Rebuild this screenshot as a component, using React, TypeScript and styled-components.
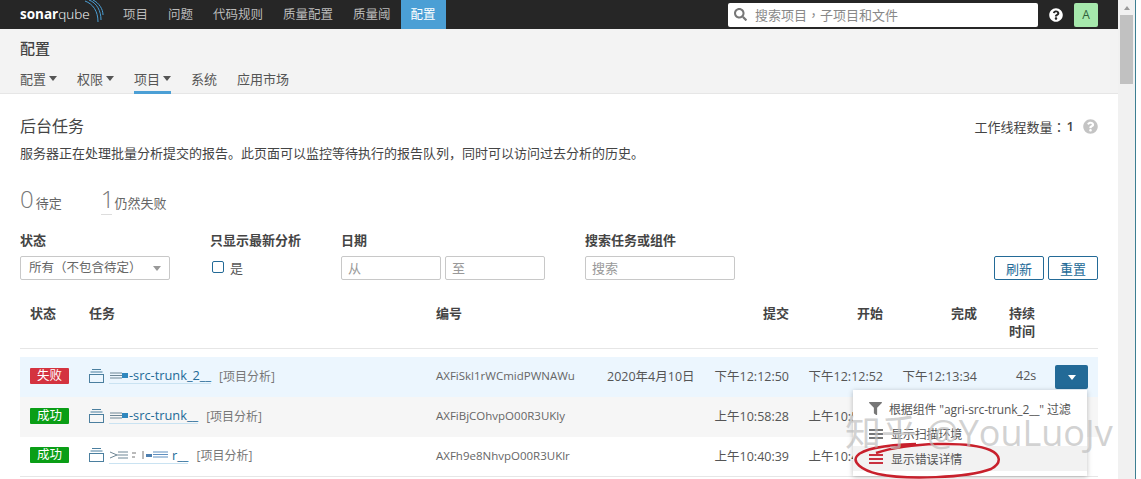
import React from "react";
import styled, { createGlobalStyle } from "styled-components";
import { FaFilter, FaQuestionCircle, FaSearch } from "react-icons/fa";

const GlobalStyle = createGlobalStyle`
  html, body {
    margin: 0;
    height: 100%;
    overflow: hidden;
    background: #fff;
  }
  body, input, button {
    font-family: "Open Sans", "Noto Sans CJK SC", sans-serif;
    font-size: 13px;
    color: #444;
  }
  * { box-sizing: border-box; }
`;

const centredPunctuation = `"Open Sans", "Noto Sans CJK TC", sans-serif`;

const Caret = () => (
  <svg width="8" height="5" viewBox="0 0 8 5" style={{ display: "block" }}>
    <path d="M0 0h8L4 5z" fill="currentColor" />
  </svg>
);

const ProjectIcon = () => (
  <svg width="15" height="14" viewBox="0 0 15 14" fill="none" stroke="#4b7f9f">
    <path d="M3 .5h9M1.5 3h12" />
    <rect x=".5" y="5.5" width="14" height="8" />
  </svg>
);

const Scribble = ({ kind }: { kind: "a" | "b" }) =>
  kind === "a" ? (
    <svg width="20" height="10" viewBox="0 0 20 10">
      <path d="M1 3h12M1 5.5h12M1 8h12" stroke="#6f8796" />
      <rect x="13" y="3" width="6" height="5" fill="#2f86bd" />
    </svg>
  ) : (
    <svg width="63" height="10" viewBox="0 0 63 10" fill="none">
      <path d="M1 2l7 3-7 3M9 2h10M8 5h11M9 8h10" stroke="#6f8796" />
      <path d="M23 3h4M23 7h3M34 1v8" stroke="#777" />
      <rect x="37" y="4" width="6" height="3" fill="#4d7fb0" />
      <path d="M44 2h15M44 4.5h15M44 7h15" stroke="#5f8fc0" />
    </svg>
  );

const tasks = [
  {
    ok: false,
    name: "-src-trunk_2__",
    scribble: "a" as const,
    id: "AXFiSkl1rWCmidPWNAWu",
    date: "2020年4月10日",
    submitted: "下午12:12:50",
    started: "下午12:12:52",
    finished: "下午12:13:34",
    duration: "42s",
  },
  {
    ok: true,
    name: "-src-trunk__",
    scribble: "a" as const,
    id: "AXFiBjCOhvpO00R3UKly",
    date: "",
    submitted: "上午10:58:28",
    started: "上午10:59:03",
    finished: "",
    duration: "",
  },
  {
    ok: true,
    name: "r__",
    scribble: "b" as const,
    id: "AXFh9e8NhvpO00R3UKlr",
    date: "",
    submitted: "上午10:40:39",
    started: "上午10:40:41",
    finished: "",
    duration: "",
  },
];

export default function App() {
  return (
    <>
      <GlobalStyle />
      <Window>
        <Page>
          <TopBar>
            <Logo>
              <b>sonar</b>qube
              <LogoArcs width="20" height="24" viewBox="0 0 20 24" fill="none" stroke="#4b9fd5">
                <path d="M1 1c8 3 13 10 13 21M5 0c8 3 12 11 12 20M9 0c6 3 10 9 10 15" />
              </LogoArcs>
            </Logo>
            <MainNav>
              <MainLink>项目</MainLink>
              <MainLink>问题</MainLink>
              <MainLink>代码规则</MainLink>
              <MainLink>质量配置</MainLink>
              <MainLink>质量阈</MainLink>
              <MainLink $active>配置</MainLink>
            </MainNav>
            <TopRight>
              <SearchBox>
                <FaSearch size={13} color="#777" />
                <span>搜索项目，子项目和文件</span>
              </SearchBox>
              <FaQuestionCircle size={14} color="#fff" />
              <Avatar>A</Avatar>
            </TopRight>
          </TopBar>

          <SubHeader>
            <SubTitle>配置</SubTitle>
            <Tabs>
              <Tab>配置 <Caret /></Tab>
              <Tab>权限 <Caret /></Tab>
              <Tab $active>项目 <Caret /></Tab>
              <Tab>系统</Tab>
              <Tab>应用市场</Tab>
            </Tabs>
          </SubHeader>

          <Content>
            <TitleRow>
              <PageTitle>后台任务</PageTitle>
              <Workers>
                工作线程数量：<strong>1</strong>
                <FaQuestionCircle size={15} color="#c4c4c4" />
              </Workers>
            </TitleRow>
            <Description>服务器正在处理批量分析提交的报告。此页面可以监控等待执行的报告队列，同时可以访问过去分析的历史。</Description>

            <Stats>
              <Stat>
                <StatValue>0</StatValue>待定
              </Stat>
              <Stat>
                <StatValue $underlined>1</StatValue>仍然失败
              </Stat>
            </Stats>

            <Filters>
              <Filter $width={190}>
                <FilterLabel>状态</FilterLabel>
                <Select>
                  所有（不包含待定）
                  <SelectCaret><Caret /></SelectCaret>
                </Select>
              </Filter>
              <Filter $width={131}>
                <FilterLabel>只显示最新分析</FilterLabel>
                <CheckRow>
                  <CheckBox />是
                </CheckRow>
              </Filter>
              <Filter $width={244}>
                <FilterLabel>日期</FilterLabel>
                <DateRow>
                  <Field $width={100}>从</Field>
                  <Field $width={100}>至</Field>
                </DateRow>
              </Filter>
              <Filter $width={150}>
                <FilterLabel>搜索任务或组件</FilterLabel>
                <Field $width={150}>搜索</Field>
              </Filter>
              <FilterButtons>
                <OutlineButton>刷新</OutlineButton>
                <OutlineButton>重置</OutlineButton>
              </FilterButtons>
            </Filters>

            <TableHead>
              <HeadCell $pad={10}>状态</HeadCell>
              <HeadCell>任务</HeadCell>
              <HeadCell>编号</HeadCell>
              <HeadCell />
              <HeadCell $right>提交</HeadCell>
              <HeadCell $right>开始</HeadCell>
              <HeadCell $right>完成</HeadCell>
              <HeadCell $pad={32}>持续<br />时间</HeadCell>
            </TableHead>

            <Rows>
              {tasks.map((task, i) => (
                <Row key={task.id} $index={i}>
                  <Cell $pad={10}>
                    <Badge $ok={task.ok}>{task.ok ? "成功" : "失败"}</Badge>
                  </Cell>
                  <TaskCell>
                    <ProjectIcon />
                    <ProjectLink>
                      <Scribble kind={task.scribble} />
                      {task.name}
                    </ProjectLink>
                    <TaskKind>[项目分析]</TaskKind>
                  </TaskCell>
                  <IdCell>{task.id}</IdCell>
                  <Cell $right>{task.date}</Cell>
                  <Cell $right>{task.submitted}</Cell>
                  <Cell $right>{task.started}</Cell>
                  <Cell $right>{task.finished}</Cell>
                  <Cell $pad={39}>{task.duration}</Cell>
                  {i === 0 && (
                    <Cell>
                      <ActionButton><Caret /></ActionButton>
                    </Cell>
                  )}
                </Row>
              ))}
              <Menu>
                <MenuItem $gap={7}>
                  <FaFilter size={13} color="#777" />
                  根据组件 "agri-src-trunk_2__" 过滤
                </MenuItem>
                <MenuItem>
                  <Bars $color="#777" />
                  显示扫描环境
                </MenuItem>
                <MenuItem $hover>
                  <Bars $color="#c9313f" />
                  显示错误详情
                </MenuItem>
              </Menu>
            </Rows>
          </Content>

          <Ellipse width="150" height="38" viewBox="0 0 150 38" fill="none">
            <path
              d="M22 12C55 1 115 0 136 9c11 5 12 13 1 19-24 9-85 11-113 5C7 29-2 21 3 15 8 9 28 4 62 3"
              stroke="#c8202c"
              strokeWidth="2.5"
            />
          </Ellipse>
          <Watermark>知乎 @YouLuoJv</Watermark>
        </Page>

        <ScrollTrack>
          <ScrollArrow />
          <ScrollThumb />
        </ScrollTrack>
        <WindowEdge />
      </Window>
    </>
  );
}

const Window = styled.div`
  display: flex;
  width: 1141px;
  height: 479px;
  overflow: hidden;
`;

const Page = styled.div`
  position: relative;
  width: 1118px;
  flex: none;
  overflow: hidden;
`;

const TopBar = styled.header`
  display: flex;
  align-items: stretch;
  height: 29px;
  padding: 0 20px;
  background: #262626;
`;

const Logo = styled.div`
  position: relative;
  width: 93px;
  color: #fff;
  font-size: 13.5px;
  font-weight: 300;
  line-height: 29px;
  b { font-weight: 700; }
`;

const LogoArcs = styled.svg`
  position: absolute;
  left: 64px;
  top: 0;
`;

const MainNav = styled.nav`
  display: flex;
`;

const MainLink = styled.a<{ $active?: boolean }>`
  padding: 0 10px;
  line-height: 29px;
  font-size: 12.5px;
  color: ${(p) => (p.$active ? "#fff" : "#bbb")};
  background: ${(p) => (p.$active ? "#4b9fd5" : "transparent")};
`;

const TopRight = styled.div`
  display: flex;
  align-items: center;
  margin-left: auto;
`;

const SearchBox = styled.div`
  display: flex;
  align-items: center;
  gap: 8px;
  width: 310px;
  height: 24px;
  margin-right: 11px;
  padding: 0 6px;
  background: #fff;
  border-radius: 2px;
  font-family: ${centredPunctuation};
  color: #888;
`;

const Avatar = styled.div`
  display: flex;
  align-items: center;
  justify-content: center;
  width: 24px;
  height: 24px;
  margin-left: 11px;
  background: #a6e8ac;
  border-radius: 2px;
  color: #2f5f3a;
  font-size: 12px;
`;

const SubHeader = styled.div`
  height: 65px;
  padding: 9px 20px 0;
  background: #f3f3f3;
  border-bottom: 1px solid #e6e6e6;
`;

const SubTitle = styled.div`
  font-size: 15px;
  line-height: 20px;
  font-weight: 500;
`;

const Tabs = styled.div`
  display: flex;
  gap: 20px;
  margin-top: 11px;
`;

const Tab = styled.a<{ $active?: boolean }>`
  display: flex;
  align-items: center;
  gap: 3px;
  height: 25px;
  padding-bottom: 3px;
  color: #555;
  border-bottom: 3px solid ${(p) => (p.$active ? "#4b9fd5" : "transparent")};
`;

const Content = styled.main`
  padding: 21px 20px 0;
`;

const TitleRow = styled.div`
  display: flex;
  align-items: center;
  justify-content: space-between;
`;

const PageTitle = styled.h1`
  margin: 0;
  font-size: 16px;
  font-weight: 400;
  line-height: 22px;
`;

const Workers = styled.div`
  display: flex;
  align-items: center;
  font-family: ${centredPunctuation};
  strong {
    margin: 0 9px 0 1px;
    font-weight: 600;
  }
`;

const Description = styled.p`
  margin: 7px 0 0;
  line-height: 18px;
`;

const Stats = styled.div`
  display: flex;
  gap: 39px;
  margin-top: 22px;
`;

const Stat = styled.div`
  display: flex;
  align-items: baseline;
  gap: 2px;
  color: #666;
`;

const StatValue = styled.span<{ $underlined?: boolean }>`
  font-size: 24px;
  font-weight: 300;
  line-height: 30px;
  letter-spacing: ${(p) => (p.$underlined ? "-2px" : "0")};
  color: #777;
  border-bottom: 1px solid ${(p) => (p.$underlined ? "#ddd" : "transparent")};
`;

const Filters = styled.div`
  display: flex;
  align-items: flex-end;
  margin-top: 16px;
`;

const Filter = styled.div<{ $width: number }>`
  width: ${(p) => p.$width}px;
`;

const FilterLabel = styled.div`
  margin-bottom: 7px;
  font-weight: 600;
  line-height: 18px;
  color: #444;
`;

const Select = styled.div`
  position: relative;
  width: 150px;
  height: 24px;
  padding: 0 8px;
  border: 1px solid #c8c8c8;
  border-radius: 2px;
  font-family: ${centredPunctuation};
  font-size: 12.5px;
  line-height: 22px;
  color: #666;
`;

const SelectCaret = styled.span`
  position: absolute;
  right: 8px;
  top: 9px;
  color: #999;
`;

const CheckRow = styled.div`
  display: flex;
  align-items: center;
  gap: 6px;
  height: 22px;
  margin: 0 0 2px 2px;
  color: #555;
`;

const CheckBox = styled.span`
  width: 12px;
  height: 12px;
  border: 1px solid #236a97;
  border-radius: 2px;
`;

const DateRow = styled.div`
  display: flex;
  gap: 4px;
`;

const Field = styled.div<{ $width: number }>`
  width: ${(p) => p.$width}px;
  height: 24px;
  padding: 0 6px;
  border: 1px solid #c8c8c8;
  border-radius: 2px;
  line-height: 22px;
  color: #999;
`;

const FilterButtons = styled.div`
  display: flex;
  gap: 4px;
  margin-left: auto;
`;

const OutlineButton = styled.button`
  width: 50px;
  height: 24px;
  padding: 0;
  background: #fff;
  border: 1px solid #236a97;
  border-radius: 2px;
  color: #236a97;
`;

const columns = "69px 347px 171px 87px 95px 94px 94px 78px 43px";

const TableHead = styled.div`
  display: grid;
  grid-template-columns: ${columns};
  height: 58px;
  margin-top: 11px;
  padding-top: 13px;
  border-bottom: 1px solid #e6e6e6;
  font-weight: 600;
  line-height: 18px;
`;

const HeadCell = styled.div<{ $pad?: number; $right?: boolean }>`
  padding-left: ${(p) => p.$pad ?? 0}px;
  text-align: ${(p) => (p.$right ? "right" : "left")};
`;

const Rows = styled.div`
  position: relative;
  margin-top: 8px;
`;

const rowBackgrounds = ["#ecf6fe", "#f6f6f6", "#fff"];

const Row = styled.div<{ $index: number }>`
  display: grid;
  grid-template-columns: ${columns};
  align-items: center;
  height: 40px;
  padding-bottom: 3px;
  background: ${(p) => rowBackgrounds[p.$index]};
  border-bottom: ${(p) => (p.$index === 2 ? "1px solid #e6e6e6" : "none")};
  font-size: 12.5px;
  color: #555;
`;

const Cell = styled.div<{ $pad?: number; $right?: boolean }>`
  padding-left: ${(p) => p.$pad ?? 0}px;
  text-align: ${(p) => (p.$right ? "right" : "left")};
  white-space: nowrap;
`;

const Badge = styled.span<{ $ok: boolean }>`
  display: block;
  width: 39px;
  height: 16px;
  border-radius: 1px;
  background: ${(p) => (p.$ok ? "#0a9e16" : "#d4333f")};
  color: #fff;
  text-align: center;
  font-size: 12.5px;
  line-height: 16px;
`;

const TaskCell = styled.div`
  display: flex;
  align-items: center;
  white-space: nowrap;
`;

const ProjectLink = styled.span`
  display: flex;
  align-items: center;
  margin-left: 5px;
  color: #236a97;
  font-size: 12.8px;
  border-bottom: 1px solid #cae3f2;
  line-height: 16px;
`;

const TaskKind = styled.span`
  margin-left: 8px;
  font-size: 12px;
  color: #777;
`;

const IdCell = styled.div`
  font-size: 11.5px;
  color: #666;
  white-space: nowrap;
`;

const ActionButton = styled.button`
  display: flex;
  align-items: center;
  justify-content: center;
  width: 33px;
  height: 24px;
  margin-top: 3px;
  padding: 0;
  background: #236a97;
  border: 0;
  border-radius: 2px;
  color: #fff;
`;

const Menu = styled.div`
  position: absolute;
  left: 833px;
  top: 33px;
  width: 234px;
  height: 86px;
  padding: 6px 0;
  background: #fff;
  box-shadow: 0 1px 5px rgba(0, 0, 0, 0.25);
  font-size: 12px;
  letter-spacing: -0.15px;
  color: #555;
`;

const MenuItem = styled.div<{ $hover?: boolean; $gap?: number }>`
  display: flex;
  align-items: center;
  gap: ${(p) => p.$gap ?? 8}px;
  height: 25px;
  padding-left: 16px;
  background: ${(p) => (p.$hover ? "#f2f2f2" : "transparent")};
  white-space: nowrap;
`;

const Bars = styled.span<{ $color: string }>`
  display: block;
  width: 14px;
  height: 10px;
  border-top: 2px solid ${(p) => p.$color};
  border-bottom: 2px solid ${(p) => p.$color};
  background: linear-gradient(${(p) => p.$color}, ${(p) => p.$color}) center / 100% 2px no-repeat;
`;

const Ellipse = styled.svg`
  position: absolute;
  left: 854px;
  top: 441px;
`;

const Watermark = styled.div`
  position: absolute;
  left: 845px;
  top: 409px;
  font-size: 36px;
  line-height: 48px;
  color: rgba(190, 190, 190, 0.7);
  white-space: nowrap;
`;

const ScrollTrack = styled.div`
  width: 17px;
  flex: none;
  padding: 0 2px;
  background: #f1f1f1;
`;

const ScrollArrow = styled.div`
  width: 0;
  margin: 6px auto 5px;
  border: 3px solid transparent;
  border-top: 0;
  border-bottom: 4px solid #9a9a9a;
`;

const ScrollThumb = styled.div`
  height: 69px;
  background: #c1c1c1;
`;

const WindowEdge = styled.div`
  width: 6px;
  flex: none;
  border-left: 1px solid #3d7f92;
  background: #fff;
`;
